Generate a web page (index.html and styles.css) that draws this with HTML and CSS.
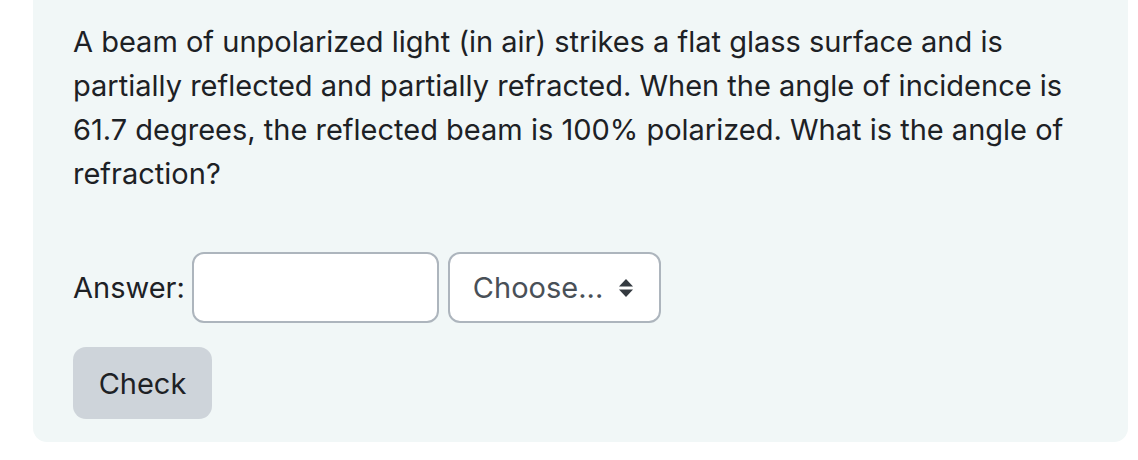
FILE: index.html
```html
<!DOCTYPE html>
<html lang="en">
<head>
    <meta charset="UTF-8">
    <meta name="viewport" content="width=device-width, initial-scale=1.0">
    <title>Question</title>
    <link rel="stylesheet" href="styles.css">
</head>
<body>
    <div class="formulation">
        <p class="qtext">
            A beam of unpolarized light (in air) strikes a flat glass surface and is partially reflected and partially refracted. When the angle of incidence is 61.7 degrees, the reflected beam is 100% polarized. What is the angle of refraction?
        </p>
        <div class="ablock">
            <label class="answer-label" for="answer">Answer:</label>
            <input class="answer-input" id="answer" type="text">
            <div class="unit-select">
                <span class="unit-text">Choose...</span>
                <svg class="unit-arrow" width="16" height="20" viewBox="0 0 16 20">
                    <path d="M8 1 L15 8.5 H1 Z" fill="#343a40"/>
                    <path d="M8 19 L15 11.5 H1 Z" fill="#343a40"/>
                </svg>
            </div>
        </div>
        <button class="check-btn" type="button">Check</button>
    </div>
</body>
</html>
```

FILE: styles.css
```css
body {
    margin: 0;
    padding: 0;
    background: #ffffff;
    color: #1d2125;
    font-family: Inter, "Noto Sans", sans-serif;
}
.formulation {
    margin-left: 33px;
    width: 1095px;
    height: 442px;
    box-sizing: border-box;
    padding: 20px 40px 0 40px;
    background: #f1f7f7;
    border-radius: 0 0 14px 14px;
}
.qtext {
    margin: 0;
    font-size: 29px;
    line-height: 44px;
}
.ablock {
    display: flex;
    align-items: center;
    margin-top: 56px;
    font-size: 29px;
}
.answer-label {
    margin-right: 7px;
}
.answer-input {
    width: 247px;
    height: 71px;
    box-sizing: border-box;
    border: 2px solid #adb5bd;
    border-radius: 12px;
    background: #ffffff;
    margin: 0 9px 0 0;
    font-size: 29px;
}
.unit-select {
    display: flex;
    align-items: center;
    width: 213px;
    height: 71px;
    box-sizing: border-box;
    padding-left: 23px;
    border: 2px solid #adb5bd;
    border-radius: 12px;
    background: #ffffff;
    color: #495057;
}
.unit-arrow {
    margin-left: 15px;
}
.check-btn {
    display: block;
    margin-top: 24px;
    width: 139px;
    height: 72px;
    padding: 0;
    border: none;
    border-radius: 13px;
    background: #ced4da;
    color: #1d2125;
    font-family: Inter, "Noto Sans", sans-serif;
    font-size: 29px;
}
```
